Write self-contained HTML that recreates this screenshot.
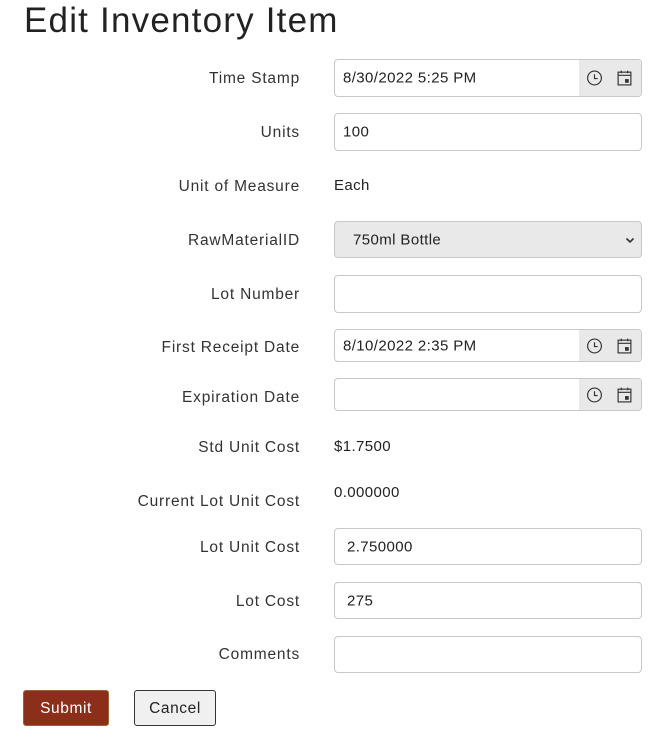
<!DOCTYPE html>
<html><head><meta charset="utf-8"><style>
body{margin:0;width:658px;height:737px;background:#fff;font-family:"Liberation Sans",sans-serif;color:#333;position:relative;overflow:hidden}
.t{position:absolute;left:24px;top:1px;font-size:35px;line-height:40px;letter-spacing:1.2px;color:#222}
.l{position:absolute;right:358px;font-size:15.5px;line-height:20px;letter-spacing:.8px;white-space:nowrap;color:#333}
.v{position:absolute;left:334px;font-size:15px;line-height:20px;letter-spacing:.4px;color:#222}
.i{position:absolute;left:334px;border:1px solid #c8c8c8;border-radius:4px;background:#fff;box-sizing:border-box;width:308px;font-size:15px;color:#222;letter-spacing:.4px}
.i span{position:absolute;left:8px;top:50%;transform:translateY(-50%)}
.ic{position:absolute;right:0;top:0;bottom:0;width:62px;background:#e9e9e9;border-radius:0 4px 4px 0}
.ic svg{position:absolute;top:50%;transform:translateY(-50%)}
.sel{background:#e9e9e9}
.b{position:absolute;top:690px;height:36px;border-radius:3px;box-sizing:border-box;font-size:15.5px;line-height:36px;text-align:center;letter-spacing:.6px}
</style></head><body>
<div class="t">Edit Inventory Item</div>

<div class="l" style="top:69px">Time Stamp</div>
<div class="i" style="top:59px;height:38px"><span>8/30/2022 5:25 PM</span><div class="ic">
<svg style="left:7px" width="17" height="17" viewBox="0 0 16 16"><circle cx="8" cy="8" r="6.5" fill="none" stroke="#333" stroke-width="1.1"/><path d="M8 4.5V8.5H11" fill="none" stroke="#333" stroke-width="1.1"/></svg>
<svg style="left:37px" width="17" height="17" viewBox="0 0 16 16"><rect x="2" y="2.5" width="12" height="12" fill="none" stroke="#333" stroke-width="1.1"/><path d="M2 5.5H14M5 1V3.5M11 1V3.5" stroke="#333" stroke-width="1.1"/><rect x="8.5" y="9" width="3.5" height="3.5" fill="#333"/></svg></div></div>

<div class="l" style="top:123px">Units</div>
<div class="i" style="top:113px;height:38px"><span>100</span></div>

<div class="l" style="top:177px">Unit of Measure</div>
<div class="v" style="top:176px">Each</div>

<div class="l" style="top:231px">RawMaterialID</div>
<div class="i sel" style="top:221px;height:37px"><span style="left:18px">750ml Bottle</span>
<svg style="position:absolute;right:6px;top:15px" width="10" height="7" viewBox="0 0 10 7"><path d="M1.5 1.5L5 5L8.5 1.5" fill="none" stroke="#333" stroke-width="1.6"/></svg></div>

<div class="l" style="top:285px">Lot Number</div>
<div class="i" style="top:275px;height:38px"></div>

<div class="l" style="top:338px">First Receipt Date</div>
<div class="i" style="top:329px;height:33px"><span>8/10/2022 2:35 PM</span><div class="ic">
<svg style="left:7px" width="17" height="17" viewBox="0 0 16 16"><circle cx="8" cy="8" r="6.5" fill="none" stroke="#333" stroke-width="1.1"/><path d="M8 4.5V8.5H11" fill="none" stroke="#333" stroke-width="1.1"/></svg>
<svg style="left:37px" width="17" height="17" viewBox="0 0 16 16"><rect x="2" y="2.5" width="12" height="12" fill="none" stroke="#333" stroke-width="1.1"/><path d="M2 5.5H14M5 1V3.5M11 1V3.5" stroke="#333" stroke-width="1.1"/><rect x="8.5" y="9" width="3.5" height="3.5" fill="#333"/></svg></div></div>

<div class="l" style="top:388px">Expiration Date</div>
<div class="i" style="top:378px;height:33px"><div class="ic">
<svg style="left:7px" width="17" height="17" viewBox="0 0 16 16"><circle cx="8" cy="8" r="6.5" fill="none" stroke="#333" stroke-width="1.1"/><path d="M8 4.5V8.5H11" fill="none" stroke="#333" stroke-width="1.1"/></svg>
<svg style="left:37px" width="17" height="17" viewBox="0 0 16 16"><rect x="2" y="2.5" width="12" height="12" fill="none" stroke="#333" stroke-width="1.1"/><path d="M2 5.5H14M5 1V3.5M11 1V3.5" stroke="#333" stroke-width="1.1"/><rect x="8.5" y="9" width="3.5" height="3.5" fill="#333"/></svg></div></div>

<div class="l" style="top:438px">Std Unit Cost</div>
<div class="v" style="top:437px">$1.7500</div>

<div class="l" style="top:492px">Current Lot Unit Cost</div>
<div class="v" style="top:483px">0.000000</div>

<div class="l" style="top:538px">Lot Unit Cost</div>
<div class="i" style="top:528px;height:37px"><span style="left:12px">2.750000</span></div>

<div class="l" style="top:592px">Lot Cost</div>
<div class="i" style="top:582px;height:37px"><span style="left:12px">275</span></div>

<div class="l" style="top:645px">Comments</div>
<div class="i" style="top:636px;height:37px"></div>

<div class="b" style="left:23px;width:86px;background:#8b2f1b;border:1px solid #a0603a;color:#fff">Submit</div>
<div class="b" style="left:134px;width:82px;background:#f0f0f0;border:1px solid #333;color:#222">Cancel</div>
</body></html>
